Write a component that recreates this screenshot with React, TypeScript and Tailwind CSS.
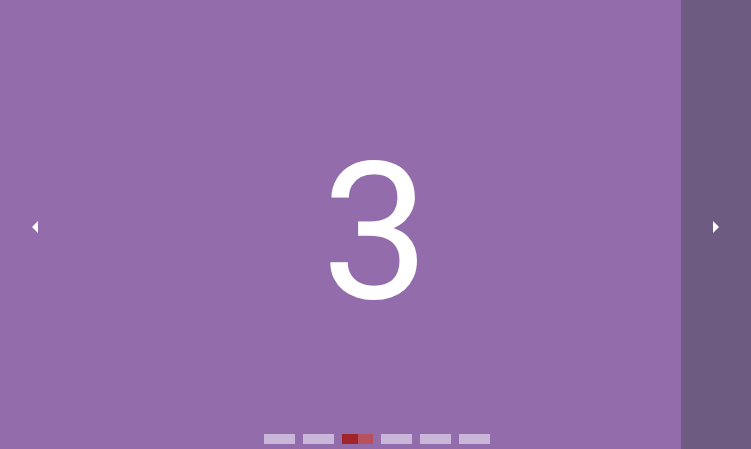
import React from "react";

export default function App() {
  const dots = [0, 1, 2, 3, 4, 5];
  return (
    <div className="relative w-[751px] h-[449px] overflow-hidden bg-[#926cab]" style={{ fontFamily: "Roboto, 'Liberation Sans', sans-serif" }}>
      <div className="absolute right-0 top-0 w-[70px] h-full bg-[#6e5b82]" />
      <div className="absolute inset-0 flex items-center justify-center pt-[17px]">
        <span className="text-white text-[192px] leading-none font-normal">3</span>
      </div>
      <div className="absolute left-[32px] top-[221px] w-0 h-0 border-t-[6px] border-b-[6px] border-r-[6px] border-t-transparent border-b-transparent border-r-white" />
      <div className="absolute left-[713px] top-[221px] w-0 h-0 border-t-[6px] border-b-[6px] border-l-[6px] border-t-transparent border-b-transparent border-l-white" />
      <div className="absolute left-0 right-0 top-[434px] flex justify-center gap-[8px] pl-[3px]">
        {dots.map((i) =>
          i === 2 ? (
            <div key={i} className="w-[31px] h-[10px] flex">
              <div className="w-[16px] h-full bg-[#a1242a]" />
              <div className="w-[15px] h-full bg-[#b5525e]" />
            </div>
          ) : (
            <div key={i} className="w-[31px] h-[10px] bg-[#c9b6d8]" />
          )
        )}
      </div>
    </div>
  );
}
